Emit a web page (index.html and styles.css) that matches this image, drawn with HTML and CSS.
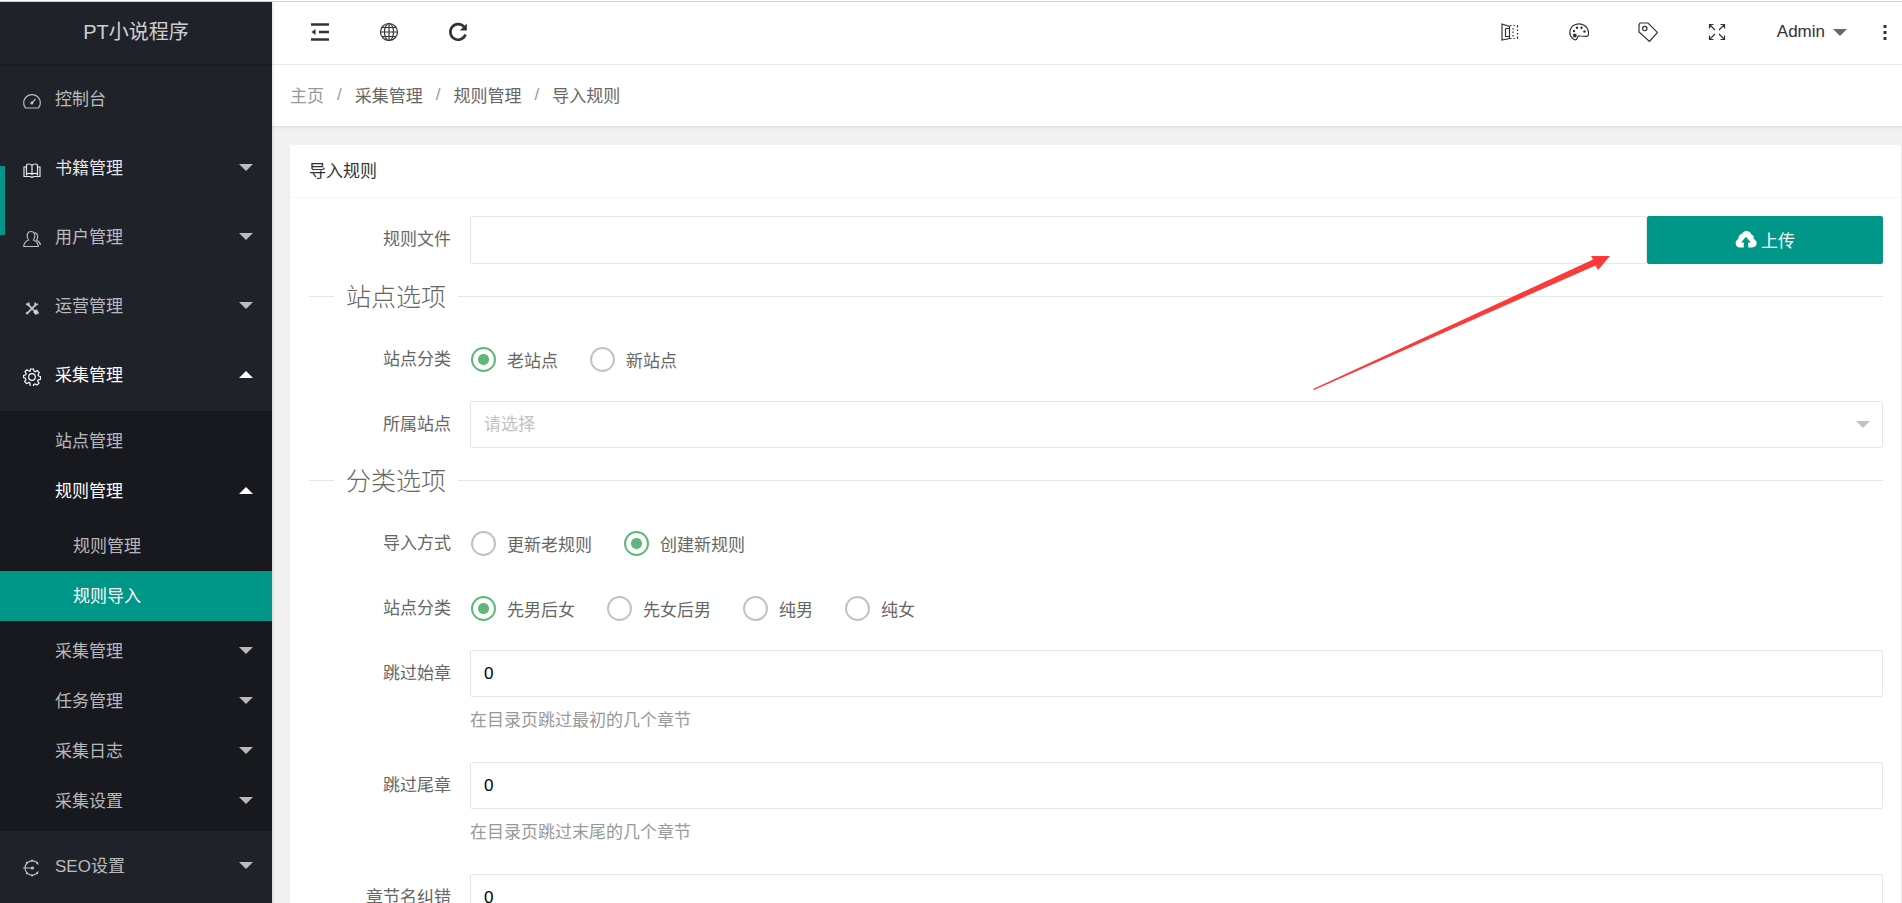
FILE: index.html
```html
<!DOCTYPE html>
<html lang="zh-CN">
<head>
    <meta charset="UTF-8">
    <meta name="viewport" content="width=device-width, initial-scale=1.0">
    <title>PT小说程序</title>
    <link rel="stylesheet" href="styles.css">
</head>
<body>

    <div class="layout">
        <aside class="side">
            <div class="logo">PT小说程序</div>
            <nav class="nav">
                <span class="nav-bar"></span>
                <a class="nav-item" href="#">
                    <svg class="nav-icon" viewBox="0 0 18 18"><path d="M2.500 16A8.300 8.300 0 1 1 15.500 16Z"/><path d="M9 11L12.500 7"/><circle class="fill" cx="8.800" cy="11" r="1.500"/></svg>
                    控制台
                </a>
                <a class="nav-item hover" href="#">
                    <svg class="nav-icon" viewBox="0 0 18 18"><path d="M9 4.500C8 2.500 3.500 2.500 3.500 4.500v9c1-1.500 4.500-1.500 5.500 0 1-1.500 4.500-1.500 5.500 0v-9C14.500 2.500 10 2.500 9 4.500zM9 4.500v9M3.500 6H1v9.500h6.500l1.500 1 1.500-1H17V6h-2.500"/></svg>
                    书籍管理<span class="caret"></span>
                </a>
                <a class="nav-item" href="#">
                    <svg class="nav-icon" viewBox="0 0 18 18"><path d="M8 1.500c-4 0-5 5-2.500 8.500C3 11 1 12.500.7 16.500h14.600C15 12.500 13 11 10.500 10 13 6.500 12 1.500 8 1.500z"/><path d="M11.500 2.500c3.500.5 4 5 2 7.500 2 1 3.500 2.500 4 5"/></svg>
                    用户管理<span class="caret"></span>
                </a>
                <a class="nav-item" href="#">
                    <svg class="nav-icon" viewBox="0 0 18 18"><path class="thick" d="M5 5.500L13.500 14M12.500 6L4.500 14"/><path class="thick" d="M3 5l2.500.5.5-2M15 5l-2.500 1-.5-2.500M3 13.500l2 1.500"/><path class="thick" d="M11.500 13.500l2-2 1.500 2.500-2 1z"/></svg>
                    运营管理<span class="caret"></span>
                </a>
                <a class="nav-item open" href="#">
                    <svg class="nav-icon" viewBox="0 0 18 18"><path d="M7.500 1h3l.5 2.200 1.300.6 1.900-1.200 2 2.100-1.200 2 .5 1.300 2 .5v2.800l-2.200.5-.6 1.300 1.300 2-2 2-2-1.200-1.300.5-.5 2.100h-3L7 15l-1.300-.6-2 1.200-2-2 1.200-2-.5-1.300L.5 9.500v-2l2.200-.7.5-1.300L2 3.600l1.900-1.800L5.800 3 7 3.200z"/><circle cx="9" cy="9" r="3.300"/></svg>
                    采集管理<span class="caret up"></span>
                </a>
                <div class="nav-child">
                    <a class="child-item" href="#">站点管理</a>
                    <a class="child-item open" href="#">规则管理<span class="caret up"></span></a>
                    <div class="nav-grandchild">
                        <a class="child-item" href="#">规则管理</a>
                        <a class="child-item active" href="#">规则导入</a>
                    </div>
                    <a class="child-item" href="#">采集管理<span class="caret"></span></a>
                    <a class="child-item" href="#">任务管理<span class="caret"></span></a>
                    <a class="child-item" href="#">采集日志<span class="caret"></span></a>
                    <a class="child-item" href="#">采集设置<span class="caret"></span></a>
                </div>
                <a class="nav-item" href="#">
                    <svg class="nav-icon" viewBox="0 0 18 18"><path d="M15.500 5.500A7.200 7.200 0 1 0 15.500 12.500M0 9h9"/><path d="M9 .5v2M9 15.500v2M3 3l1.300 1.300M3 15l1.300-1.300M14.500 3l-1 1.500M14.500 15l-1-1.500"/><circle class="fill" cx="9.500" cy="9" r="1.600"/></svg>
                    SEO设置<span class="caret"></span>
                </a>
            </nav>
        </aside>

        <div class="main">
            <header class="header">
                <div class="tools">
                    <button class="tool" aria-label="侧边伸缩">
                        <svg viewBox="0 0 20 20"><path class="bold" d="M1 2.500h18M9 10h10M1 17.500h18"/><path class="fill" d="M1.500 10l4-3v6z"/></svg>
                    </button>
                    <button class="tool" aria-label="前台">
                        <svg viewBox="0 0 20 20"><circle cx="10" cy="10" r="8.500"/><ellipse cx="10" cy="10" rx="4.500" ry="8.500"/><path d="M10 1.500v17M1.500 10h17M3 5.500h14M3 14.500h14"/></svg>
                    </button>
                    <button class="tool" aria-label="刷新">
                        <svg viewBox="0 0 20 20"><path class="bold" d="M16.200 5A7.800 7.800 0 1 0 17.500 12.500"/><path class="fill" d="M18.800 1.500v7h-7z"/></svg>
                    </button>
                </div>
                <div class="tools">
                    <button class="tool" aria-label="切换">
                        <svg viewBox="0 0 20 20"><path d="M2 2l7.500 2.500v12L2 18zM5.500 6.500h4M5.500 6.500v8h4"/><path class="dash" d="M10 3.500h8M10 16.500h8M13 6v10M17.500 4v14"/></svg>
                    </button>
                    <button class="tool" aria-label="主题">
                        <svg viewBox="0 0 20 20"><path d="M11.500 14c-2-.5-3 .5-3.500 2.500-.5 2-2.500 1.500-4 .3C-1 12.500.3 5 6 2.700 13-.2 19.800 4.500 19.500 12c0 2-1.500 2.700-3 2.400z"/><circle class="fill" cx="5.800" cy="13.500" r="1.900"/><circle class="fill" cx="5" cy="9" r="1.200"/><circle class="fill" cx="8" cy="5.800" r="1.200"/><circle class="fill" cx="12.500" cy="5.800" r="1.200"/><circle class="fill" cx="15.500" cy="9.500" r="1.200"/></svg>
                    </button>
                    <button class="tool" aria-label="便签">
                        <svg viewBox="0 0 20 20"><path d="M2 1h8l9.500 9.500-8 9L1 10V3z"/><circle cx="6.800" cy="6.500" r="2.200"/></svg>
                    </button>
                    <button class="tool" aria-label="全屏">
                        <svg viewBox="0 0 20 20"><path d="M2.500 6.500v-4h4M2.500 2.500l5.500 5.500M13.500 2.500h4v4M17.500 2.500l-5.500 5.500M2.500 13.500v4h4M2.500 17.500l5.500-5.500M17.500 13.500v4h-4M17.500 17.500l-5.500-5.500"/></svg>
                    </button>
                    <button class="user">Admin<span class="caret"></span></button>
                    <button class="more" aria-label="更多">
                        <svg viewBox="0 0 4 20"><path class="fill" d="M.5 3h3v3h-3zM.5 9h3v3h-3zM.5 15h3v3h-3z"/></svg>
                    </button>
                </div>
            </header>

            <nav class="breadcrumb">
                <a class="home" href="#">主页</a><span>/</span>
                <a href="#">采集管理</a><span>/</span>
                <a href="#">规则管理</a><span>/</span>
                <a href="#">导入规则</a>
            </nav>

            <div class="card">
                <h1 class="card-header">导入规则</h1>
                <form class="card-body">
                    <div class="form-item first">
                        <label class="form-label" for="rule-file">规则文件</label>
                        <input class="input" id="rule-file" type="text">
                        <button class="upload" type="button">
                            <svg viewBox="0 0 24 20"><path d="M5.500 19.500C-.5 19.500-1 12 3.500 10 3.500 6 6 4.500 7.500 4.500 9-.5 17 0 18 5c2.500.5 3 3 2.500 5 5 2 4.500 9.500-2 9.500h-4V14h3L12 7.500 6.500 14h3v5.500z"/></svg>
                            上传
                        </button>
                    </div>

                    <h2 class="field-title">站点选项</h2>

                    <div class="form-item">
                        <span class="form-label">站点分类</span>
                        <label class="radio"><input type="radio" name="site" checked>老站点</label>
                        <label class="radio"><input type="radio" name="site">新站点</label>
                    </div>
                    <div class="form-item">
                        <label class="form-label" for="site-id">所属站点</label>
                        <div class="select">
                            <select class="input" id="site-id">
                                <option>请选择</option>
                            </select>
                            <span class="caret"></span>
                        </div>
                    </div>

                    <h2 class="field-title">分类选项</h2>

                    <div class="form-item">
                        <span class="form-label">导入方式</span>
                        <label class="radio"><input type="radio" name="mode">更新老规则</label>
                        <label class="radio"><input type="radio" name="mode" checked>创建新规则</label>
                    </div>
                    <div class="form-item">
                        <span class="form-label">站点分类</span>
                        <label class="radio"><input type="radio" name="gender" checked>先男后女</label>
                        <label class="radio"><input type="radio" name="gender">先女后男</label>
                        <label class="radio"><input type="radio" name="gender">纯男</label>
                        <label class="radio"><input type="radio" name="gender">纯女</label>
                    </div>
                    <div class="form-item">
                        <label class="form-label" for="skip-start">跳过始章</label>
                        <input class="input" id="skip-start" type="text" value="0">
                        <p class="hint">在目录页跳过最初的几个章节</p>
                    </div>
                    <div class="form-item">
                        <label class="form-label" for="skip-end">跳过尾章</label>
                        <input class="input" id="skip-end" type="text" value="0">
                        <p class="hint">在目录页跳过末尾的几个章节</p>
                    </div>
                    <div class="form-item">
                        <label class="form-label" for="name-fix">章节名纠错</label>
                        <input class="input" id="name-fix" type="text" value="0">
                    </div>
                </form>

                <!-- 指向上传按钮的箭头 -->
                <svg class="pointer" viewBox="0 0 298 135"><path d="M0 133L280 3.500 278 0H297L285 14 282.500 9.500 1 134z"/></svg>
            </div>
        </div>
    </div>

</body>
</html>
```
FILE: styles.css
```css
:root {
    --green: #009688;
    --radio-green: #5fb878;
    --side-bg: #20222a;
    --line: #e6e6e6;
    --text: #666;
}

* {
    box-sizing: border-box;
}

html,
body {
    height: 100%;
    overflow: hidden;
}

body {
    margin: 0;
    font-family: "Liberation Sans", "Noto Sans CJK SC", sans-serif;
    font-size: 17px;
    color: var(--text);
    background-color: #f1f1f1;
}

a {
    color: inherit;
    text-decoration: none;
}

button {
    padding: 0;
    border: none;
    background: none;
    font: inherit;
    color: inherit;
    cursor: pointer;
}

.layout {
    display: flex;
    height: 100%;
    padding-top: 1px;
    border-top: 1px solid #fff;
    overflow: hidden;
    background: linear-gradient(#d2d4d4 1px, #f1f1f1 1px);
}

/* 侧边菜单 */
.side {
    flex: none;
    width: 272px;
    overflow: hidden;
    background-color: var(--side-bg);
    color: rgba(255, 255, 255, 0.7);
    box-shadow: 1px 0 3px rgba(0, 0, 0, 0.12);
    z-index: 1;
}

.logo {
    height: 62px;
    line-height: 60px;
    font-size: 20px;
    text-align: center;
    color: rgba(255, 255, 255, 0.8);
    box-shadow: 0 1px 2px rgba(0, 0, 0, 0.2);
}

.nav {
    position: relative;
}

.nav-bar {
    position: absolute;
    top: 102px;
    left: 0;
    width: 5px;
    height: 69px;
    background-color: var(--green);
}

.nav-item {
    display: flex;
    align-items: center;
    gap: 14px;
    height: 69px;
    padding: 0 19px 2px 23px;
}

.nav-item.hover {
    color: rgba(255, 255, 255, 0.9);
}

.nav-item.hover .caret {
    color: rgba(255, 255, 255, 0.7);
}

.nav-item.open,
.child-item.open {
    color: #fff;
}

.nav-item.open {
    margin-bottom: 2px;
}

.nav-icon {
    width: 18px;
    height: 18px;
    margin-top: 6px;
}

svg {
    fill: none;
    stroke: currentColor;
    stroke-width: 1.2;
}

svg .fill {
    fill: currentColor;
    stroke: none;
}

svg .bold {
    stroke-width: 2.6;
}

svg .thick {
    stroke-width: 1.8;
}

svg .dash {
    stroke-dasharray: 1.5 2;
}

.caret {
    margin-left: auto;
    border: 7px solid transparent;
    border-top-color: currentColor;
    border-bottom-width: 0;
}

.caret.up {
    border-width: 0 7px 7px;
    border-bottom-color: currentColor;
}

.side .caret {
    margin-top: 2px;
}

.nav-child {
    padding: 5px 0;
    background-color: #18191e;
}

.nav-grandchild {
    padding: 5px 0;
}

.child-item {
    display: flex;
    align-items: center;
    height: 50px;
    padding: 0 19px 3px 55px;
}

.nav-grandchild .child-item {
    padding-left: 73px;
}

.child-item.active {
    background-color: var(--green);
    color: #fff;
}

/* 头部 */
.main {
    flex: 1;
    min-width: 0;
}

.header {
    display: flex;
    justify-content: space-between;
    height: 63px;
    padding-left: 13px;
    border-bottom: 1px solid #ebebeb;
    background-color: #fff;
    color: #333;
}

.tools {
    display: flex;
    height: 60px;
}

.tool {
    display: flex;
    align-items: center;
    justify-content: center;
    width: 69px;
}

.tool svg {
    width: 20px;
    height: 20px;
}

.user {
    display: flex;
    align-items: center;
    gap: 8px;
    padding: 0 25px;
}

.user .caret {
    color: #666;
}

.more {
    display: flex;
    align-items: center;
    padding: 0 15px 0 11px;
}

.more svg {
    width: 4px;
    height: 20px;
}

.breadcrumb {
    display: flex;
    align-items: center;
    gap: 13px;
    height: 61px;
    padding: 0 18px 2px;
    background-color: #fff;
    box-shadow: 0 1px 3px rgba(0, 0, 0, 0.1);
}

.breadcrumb .home,
.breadcrumb span {
    color: #999;
}

/* 卡片表单 */
.card {
    position: relative;
    margin: 19px 1px 0 18px;
    border-radius: 2px;
    background-color: #fff;
    box-shadow: 0 1px 2px rgba(0, 0, 0, 0.05);
}

.card-header {
    height: 53px;
    margin: 0;
    padding: 0 19px;
    border-bottom: 1px solid #f6f6f6;
    line-height: 53px;
    font-size: 17px;
    font-weight: 400;
    color: #333;
}

.card-body {
    padding: 18px 18px 18px 19px;
}

.form-item {
    display: flex;
    flex-wrap: wrap;
    margin-bottom: 18px;
}

.form-item.first,
.form-item:has(+ .field-title) {
    margin-bottom: 0;
}

.form-label {
    width: 161px;
    padding-right: 19px;
    line-height: 47px;
    text-align: right;
}

.input {
    flex: 1;
    width: 100%;
    height: 47px;
    padding: 0 13px;
    border: 1px solid var(--line);
    border-radius: 2px;
    background-color: #fff;
    font: inherit;
    color: #000;
}

.first .input,
.upload {
    height: 48px;
}

.upload {
    display: flex;
    align-items: center;
    justify-content: center;
    gap: 4px;
    width: 236px;
    padding-bottom: 2px;
    border-radius: 2px;
    background-color: var(--green);
    color: #fff;
}

.upload svg {
    width: 22px;
    height: 18px;
    fill: #fff;
    stroke: none;
}

.select {
    position: relative;
    flex: 1;
}

.select .input {
    appearance: none;
    color: #c2c2c2;
}

.select .caret {
    position: absolute;
    top: 20px;
    right: 13px;
    color: #c2c2c2;
    pointer-events: none;
}

.field-title {
    display: flex;
    align-items: center;
    gap: 12px;
    height: 36px;
    margin: 13px 0 23px;
    font-size: 25px;
    font-weight: 300;
}

.field-title::before,
.field-title::after {
    content: "";
    width: 25px;
    height: 1px;
    margin-top: 2px;
    background-color: var(--line);
}

.field-title::after {
    flex: 1;
}

.radio {
    display: flex;
    align-items: center;
    height: 47px;
    margin-right: 31px;
    cursor: pointer;
}

.radio input {
    appearance: none;
    width: 25px;
    height: 25px;
    margin: 0 11px 0 1px;
    border: 2px solid #c2c2c2;
    border-radius: 50%;
}

.radio input:checked {
    border-color: var(--radio-green);
    background: radial-gradient(circle, var(--radio-green) 5px, #fff 6px);
}

.hint {
    width: 100%;
    margin: 0;
    padding-left: 161px;
    line-height: 47px;
    color: #999;
}

.pointer {
    position: absolute;
    top: 111px;
    right: 290px;
    width: 298px;
    height: 135px;
    fill: #fb3a3a;
    stroke: none;
    pointer-events: none;
}
```
